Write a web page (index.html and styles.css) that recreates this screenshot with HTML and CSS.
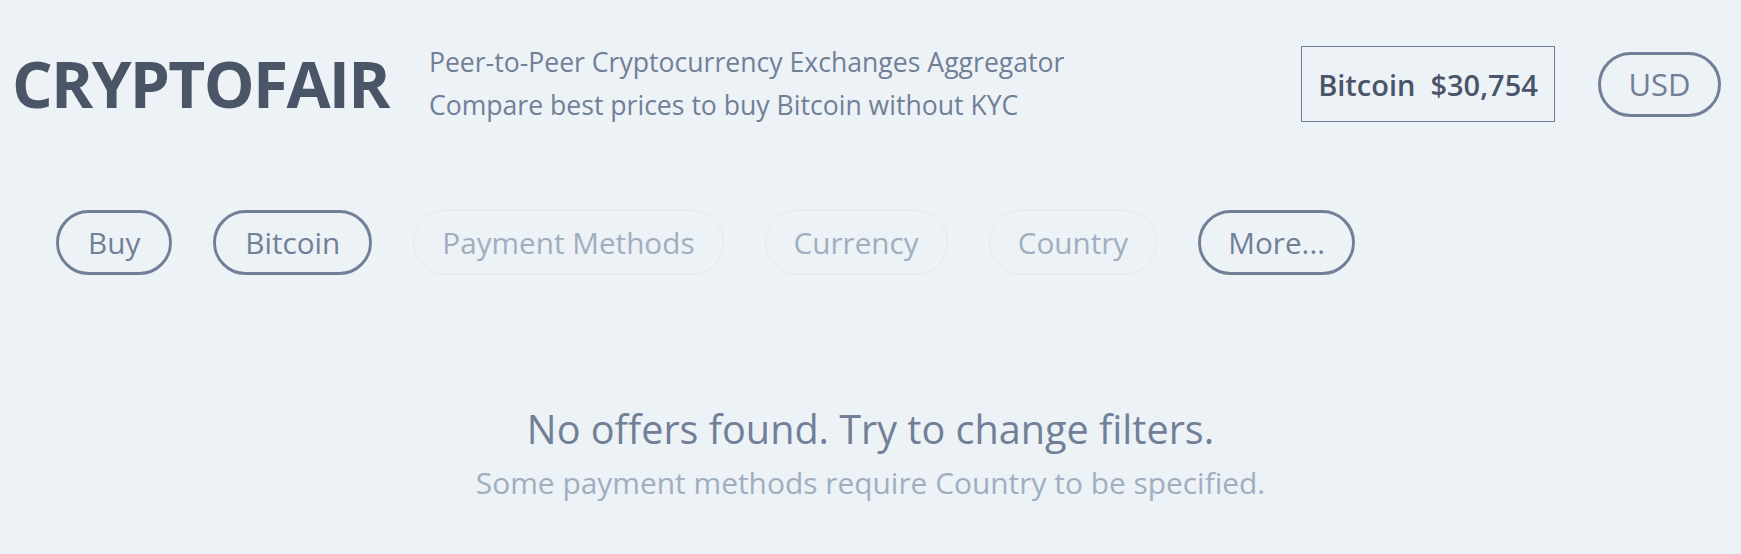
FILE: index.html
```html
<!DOCTYPE html>
<html lang="en">
<head>
<meta charset="utf-8">
<title>CryptoFair</title>
<link rel="stylesheet" href="styles.css">
</head>
<body>
<header class="header">
  <div class="logo">CRYPTOFAIR</div>
  <div class="tagline">
    <div>Peer-to-Peer Cryptocurrency Exchanges Aggregator</div>
    <div>Compare best prices to buy Bitcoin without KYC</div>
  </div>
  <div class="spacer"></div>
  <div class="price-box"><span class="coin">Bitcoin</span><span class="price">$30,754</span></div>
  <button class="pill currency-pill">USD</button>
</header>
<nav class="filters">
  <button class="pill">Buy</button>
  <button class="pill">Bitcoin</button>
  <button class="pill pill-off">Payment Methods</button>
  <button class="pill pill-off">Currency</button>
  <button class="pill pill-off">Country</button>
  <button class="pill pill-narrow">More...</button>
</nav>
<main class="empty">
  <div class="empty-title">No offers found. Try to change filters.</div>
  <div class="empty-sub">Some payment methods require Country to be specified.</div>
</main>
</body>
</html>
```
FILE: styles.css
```css
html, body {
  margin: 0;
  padding: 0;
  background: #edf2f7;
  font-family: "Open Sans", "Noto Sans", sans-serif;
}
.header {
  display: flex;
  align-items: center;
  padding: 41px 20px 0 12px;
}
.logo {
  font-size: 64px;
  font-weight: 700;
  color: #4a5568;
  line-height: 76px;
  letter-spacing: -1.7px;
}
.tagline {
  margin-left: 40px;
  font-size: 26.6px;
  line-height: 43px;
  color: #718096;
}
.spacer { flex: 1; }
.price-box {
  box-sizing: border-box;
  border: 1px solid #718096;
  height: 76px;
  width: 254px;
  display: flex;
  align-items: center;
  justify-content: center;
  gap: 15px;
  color: #4a5568;
  font-size: 29px;
  font-weight: 600;
}
.pill {
  box-sizing: border-box;
  font-family: inherit;
  background: transparent;
  border: 3px solid #718096;
  border-radius: 999px;
  height: 65px;
  padding: 0 29px;
  font-size: 29.7px;
  color: #718096;
  cursor: pointer;
}
.currency-pill {
  margin-left: 43px;
  width: 123px;
  padding: 0;
  font-size: 31px;
}
.pill-off {
  border: 1px solid #e2e8f0;
  padding: 0 28px;
  color: #a0aec0;
}
.pill-narrow {
  padding: 0 27px;
}
.filters {
  display: flex;
  gap: 41px;
  margin-top: 83px;
  padding-left: 56px;
}
.empty {
  margin-top: 126px;
  text-align: center;
}
.empty-title {
  font-size: 39.6px;
  line-height: 57px;
  color: #718096;
}
.empty-sub {
  margin-top: 4px;
  font-size: 29.9px;
  line-height: 42px;
  color: #a0aec0;
}
```
